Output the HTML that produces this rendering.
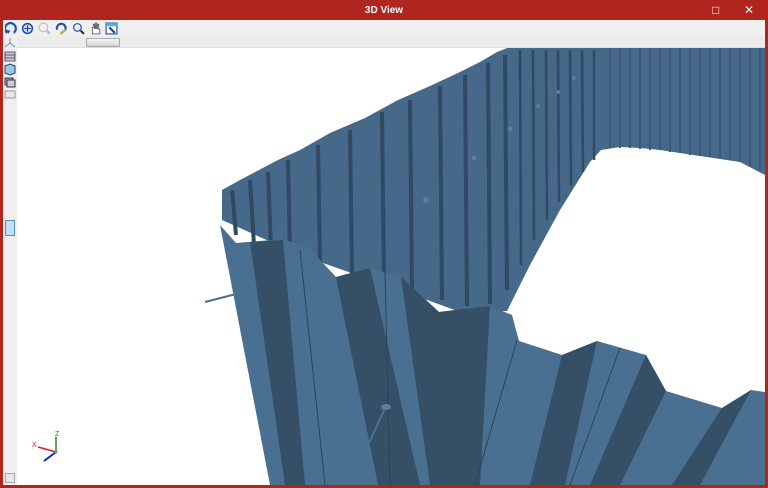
<!DOCTYPE html>
<html><head><style>
*{margin:0;padding:0;box-sizing:border-box}
body{width:768px;height:488px;background:#b0261e;position:relative;overflow:hidden;font-family:"Liberation Sans",sans-serif}
.title{position:absolute;left:0;top:0;width:768px;height:20px;color:#fff;font-size:10px;font-weight:bold;text-align:center;line-height:22px}
.ctl{position:absolute;top:3px;color:#fff;font-size:12px}
.tb{position:absolute;left:3px;top:20px;width:762px;height:16px;background:#f0f0f0}
.hs{position:absolute;left:17px;top:36px;width:748px;height:12px;background:#ececec;border-bottom:1px solid #ddd}
.thumb{position:absolute;left:86px;top:38px;width:34px;height:9px;background:linear-gradient(#f4f4f4,#d6d6d6);border:1px solid #aaa;border-radius:1px}
.lt{position:absolute;left:3px;top:36px;width:14px;height:449px;background:#f0f0f0}
.vp{position:absolute;left:17px;top:48px;width:748px;height:437px;background:#fff;overflow:hidden}
.ic{position:absolute;top:22px;width:13px;height:13px}
</style></head><body>
<div class="title">3D View</div>
<div class="ctl" style="left:712px">&#9633;</div>
<div class="ctl" style="left:744px">&#10005;</div>
<div class="tb"></div>
<svg class="ic" style="left:5px" viewBox="0 0 12 12"><path d="M2 10 A5 5 0 1 1 8 10" fill="none" stroke="#1f4fc0" stroke-width="2"/><path d="M1 7 L3 11 L5 8Z" fill="#1f4fc0"/></svg>
<svg class="ic" style="left:21px" viewBox="0 0 12 12"><circle cx="6" cy="6" r="4.5" fill="#cfe0ff" stroke="#1f3fa0" stroke-width="1.3"/><path d="M6 3v6M3 6h6" stroke="#1f3fa0"/></svg>
<svg class="ic" style="left:38px" viewBox="0 0 12 12"><circle cx="5" cy="5" r="4" fill="none" stroke="#bbb"/><path d="M8 8l3 3" stroke="#bbb" stroke-width="2"/></svg>
<svg class="ic" style="left:55px" viewBox="0 0 12 12"><path d="M2 7 A4 4 0 1 1 9 8" fill="none" stroke="#1f4fc0" stroke-width="2"/><path d="M5 11l5-4" stroke="#d9a020" stroke-width="2"/></svg>
<svg class="ic" style="left:72px" viewBox="0 0 12 12"><circle cx="5" cy="5" r="3.5" fill="#e8f0ff" stroke="#1f3fa0"/><path d="M8 8l3 3" stroke="#333" stroke-width="2"/></svg>
<svg class="ic" style="left:89px" viewBox="0 0 12 12"><path d="M3 11V5h1V2h1v4h1V1h1v5h1V2h1v5h1v4z" fill="#fff" stroke="#444" stroke-width=".7"/></svg>
<svg class="ic" style="left:105px" viewBox="0 0 12 12"><rect x="1" y="1" width="10" height="10" fill="#fff" stroke="#1f3fa0"/><rect x="1" y="1" width="10" height="3" fill="#3fc0d0"/><path d="M4 5l5 5" stroke="#1f3fa0" stroke-width="2"/></svg>
<div class="lt"></div>
<svg style="position:absolute;left:4px;top:37px" width="12" height="62" viewBox="0 0 12 62"><path d="M6 1v5M6 6l-5 4M6 6l5 4" stroke="#6a8ab0" fill="none"/><path d="M1 15h10v3h-10zM1 18h10v3h-10zM1 21h10v3h-10z" fill="#ccd" stroke="#334" stroke-width=".8"/><path d="M1 29l5-2 5 2v7l-5 2-5-2z" fill="#9cc8e8" stroke="#245"/><rect x="1" y="41" width="8" height="7" fill="#aac" stroke="#334"/><rect x="3" y="43" width="8" height="7" fill="#ccd" stroke="#334"/><rect x="1" y="54" width="10" height="7" fill="#e8e8e8" stroke="#999"/></svg>
<div style="position:absolute;left:5px;top:220px;width:10px;height:16px;background:#bfe0f6;border:1px solid #5a8fb8"></div>
<div style="position:absolute;left:5px;top:473px;width:10px;height:10px;background:#e8e8e8;border:1px solid #aaa"></div>
<div class="hs"></div><div class="thumb"></div>
<div class="vp">
<svg width="748" height="437" viewBox="17 48 748 437">
<polygon points="222,190 240,180 278,160 300,150 330,133 365,118 398,100 430,86 460,72 480,62 497,52 510,47 765,47 765,175 740,162 700,156 660,150 640,148 620,147 601,150 590,162 560,210 530,265 507,311 460,312 400,290 300,255 222,220" fill="#46698a"/>
<g stroke="#2f4a62" stroke-width="4">
<line x1="232" y1="190" x2="236" y2="235"/><line x1="250" y1="180" x2="254" y2="245"/><line x1="268" y1="172" x2="271" y2="250"/><line x1="288" y1="160" x2="290" y2="256"/><line x1="318" y1="145" x2="320" y2="262"/><line x1="350" y1="130" x2="352" y2="276"/><line x1="382" y1="112" x2="384" y2="285"/><line x1="410" y1="100" x2="412" y2="292"/><line x1="440" y1="86" x2="442" y2="300"/><line x1="465" y1="75" x2="467" y2="306"/><line x1="488" y1="63" x2="490" y2="304"/><line x1="505" y1="55" x2="507" y2="290"/>
</g>
<g stroke="#2f4a62" stroke-width="2.5">
<line x1="520" y1="50" x2="521" y2="265"/><line x1="533" y1="50" x2="534" y2="240"/><line x1="546" y1="50" x2="547" y2="220"/><line x1="558" y1="50" x2="559" y2="202"/><line x1="570" y1="50" x2="571" y2="186"/><line x1="582" y1="50" x2="583" y2="172"/><line x1="594" y1="50" x2="594" y2="160"/>
</g>
<g stroke="#39597a" stroke-width="2">
<line x1="610" y1="48" x2="610" y2="148"/><line x1="620" y1="48" x2="620" y2="148"/><line x1="630" y1="48" x2="630" y2="148"/><line x1="640" y1="48" x2="640" y2="149"/><line x1="650" y1="48" x2="650" y2="150"/><line x1="660" y1="48" x2="660" y2="150"/><line x1="670" y1="48" x2="670" y2="152"/><line x1="680" y1="48" x2="680" y2="153"/><line x1="690" y1="48" x2="690" y2="155"/><line x1="700" y1="48" x2="700" y2="156"/><line x1="710" y1="48" x2="710" y2="157"/><line x1="720" y1="48" x2="720" y2="158"/><line x1="730" y1="48" x2="730" y2="160"/><line x1="740" y1="48" x2="740" y2="162"/><line x1="750" y1="48" x2="750" y2="166"/><line x1="760" y1="48" x2="760" y2="170"/>
</g>
<line x1="205" y1="302" x2="236" y2="294" stroke="#4a7091" stroke-width="2"/>
<polygon points="220,225 236,243 283,239 309,248 336,277 370,268 401,277 439,312 490,306 512,315 519,341 562,355 597,341 646,355 666,391 722,408 751,390 765,392 765,485 270,485" fill="#4a7091"/>
<g fill="#344f66">
<polygon points="250,242 283,240 305,485 285,485"/>
<polygon points="336,277 370,268 420,485 378,485"/>
<polygon points="401,277 439,312 460,485 430,485"/>
<polygon points="439,312 490,306 480,485 460,485"/>
<polygon points="562,355 597,341 565,485 530,485"/>
<polygon points="646,355 666,391 620,485 590,485"/>
<polygon points="722,408 751,390 700,485 672,485"/>
</g>
<g stroke="#2b4356" stroke-width="1">
<line x1="300" y1="250" x2="325" y2="485"/><line x1="385" y1="272" x2="390" y2="485"/><line x1="517" y1="340" x2="475" y2="485"/><line x1="620" y1="348" x2="570" y2="485"/>
</g>
<line x1="385" y1="408" x2="350" y2="485" stroke="#4a7091" stroke-width="2"/>
<ellipse cx="386" cy="407" rx="5" ry="3" fill="#5a80a0"/>
<g fill="#5a80a0"><circle cx="426" cy="200" r="3"/><circle cx="474" cy="158" r="2.5"/><circle cx="510" cy="129" r="2.5"/><circle cx="538" cy="106" r="2"/><circle cx="558" cy="92" r="2"/><circle cx="574" cy="78" r="2"/></g>
<line x1="56" y1="452" x2="56" y2="437" stroke="#1a8a1a" stroke-width="1.5"/><text x="55" y="436" font-size="7" fill="#1a8a1a" font-family="Liberation Sans">Z</text>
<line x1="56" y1="452" x2="38" y2="447" stroke="#d02020" stroke-width="1.5"/><text x="32" y="447" font-size="7" fill="#d02020" font-family="Liberation Sans">X</text>
<line x1="56" y1="452" x2="44" y2="461" stroke="#1020e0" stroke-width="2"/>
<circle cx="56" cy="452" r="1.5" fill="#888"/>
</svg>
</div>
</body></html>
